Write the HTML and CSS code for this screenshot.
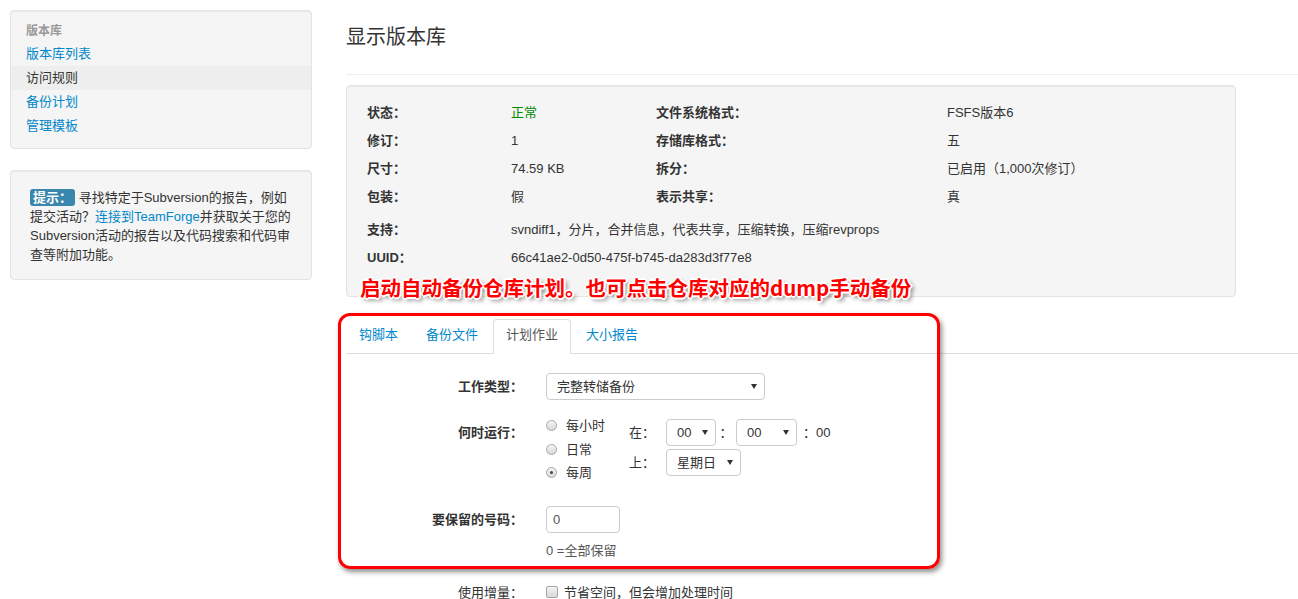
FILE: index.html
```html
<!DOCTYPE html>
<html lang="zh-CN">
<head>
    <meta charset="UTF-8">
    <title>显示版本库</title>
    <link rel="stylesheet" href="styles.css">
</head>
<body>
    <div class="page">
        <div class="sidebar">
            <div class="well nav-well">
                <div class="nav-header">版本库</div>
                <a class="nav-item" href="#">版本库列表</a>
                <a class="nav-item active" href="#">访问规则</a>
                <a class="nav-item" href="#">备份计划</a>
                <a class="nav-item" href="#">管理模板</a>
            </div>
            <div class="well tip-well">
                <span class="tip-label">提示：</span> 寻找特定于Subversion的报告，例如提交活动？<a href="#">连接到TeamForge</a>并获取关于您的Subversion活动的报告以及代码搜索和代码审查等附加功能。
            </div>
        </div>

        <div class="main">
            <div class="page-header">
                <h1>显示版本库</h1>
            </div>

            <div class="well info-well">
                <div class="info-grid">
                    <span class="k">状态：</span><span class="ok">正常</span>
                    <span class="k">文件系统格式：</span><span>FSFS版本6</span>
                    <span class="k">修订：</span><span>1</span>
                    <span class="k">存储库格式：</span><span>五</span>
                    <span class="k">尺寸：</span><span>74.59 KB</span>
                    <span class="k">拆分：</span><span>已启用（1,000次修订）</span>
                    <span class="k">包装：</span><span>假</span>
                    <span class="k">表示共享：</span><span>真</span>
                </div>
                <div class="info-grid wide">
                    <span class="k">支持：</span><span>svndiff1，分片，合并信息，代表共享，压缩转换，压缩revprops</span>
                    <span class="k">UUID：</span><span>66c41ae2-0d50-475f-b745-da283d3f77e8</span>
                </div>
            </div>

            <ul class="tabs">
                <li><a href="#">钩脚本</a></li>
                <li><a href="#">备份文件</a></li>
                <li class="active"><a href="#">计划作业</a></li>
                <li><a href="#">大小报告</a></li>
            </ul>

            <div class="tab-pane">
                <div class="form-row">
                    <label class="lbl">工作类型：</label>
                    <div class="controls">
                        <span class="select-wrap sel-type">
                            <select><option>完整转储备份</option></select>
                        </span>
                    </div>
                </div>

                <div class="form-row when-row">
                    <label class="lbl">何时运行：</label>
                    <div class="controls when">
                        <div class="radio-list">
                            <label class="radio"><input type="radio" name="when">每小时</label>
                            <label class="radio"><input type="radio" name="when">日常</label>
                            <label class="radio"><input type="radio" name="when" checked>每周</label>
                        </div>
                        <div class="time">
                            <div class="time-line">
                                <span class="time-lbl">在：</span>
                                <span class="select-wrap sel-hour"><select><option>00</option></select></span>
                                <span class="sep">：</span>
                                <span class="select-wrap sel-min"><select><option>00</option></select></span>
                                <span class="tail">：00</span>
                            </div>
                            <div class="time-line">
                                <span class="time-lbl">上：</span>
                                <span class="select-wrap sel-day"><select><option>星期日</option></select></span>
                            </div>
                        </div>
                    </div>
                </div>

                <div class="form-row">
                    <label class="lbl">要保留的号码：</label>
                    <div class="controls">
                        <input class="num-input" type="text" value="0">
                        <div class="help">0 =全部保留</div>
                    </div>
                </div>

                <div class="form-row">
                    <label class="lbl plain">使用增量：</label>
                    <div class="controls">
                        <label class="check"><input type="checkbox">节省空间，但会增加处理时间</label>
                    </div>
                </div>
            </div>
        </div>
    </div>

    <div class="callout-frame"></div>
    <div class="callout-text">启动自动备份仓库计划。也可点击仓库对应的dump手动备份</div>
</body>
</html>
```

FILE: styles.css
```css
* {
    box-sizing: border-box;
}
body {
    margin: 0;
    padding: 10px 0 0 10px;
    font-family: "Liberation Sans", "Noto Sans CJK SC", sans-serif;
    font-size: 13px;
    line-height: 18px;
    color: #333;
    background: #fff;
}
a {
    color: #0088cc;
    text-decoration: none;
}
.page {
    display: flex;
    align-items: flex-start;
    gap: 34px;
}
.sidebar {
    width: 302px;
    flex-shrink: 0;
}
.well {
    background: #f5f5f5;
    border: 1px solid #e3e3e3;
    border-radius: 4px;
    box-shadow: inset 0 1px 1px rgba(0, 0, 0, 0.05);
}
.nav-well {
    padding: 10px 0;
}
.nav-header {
    padding: 0 15px;
    line-height: 21px;
    font-size: 12px;
    font-weight: bold;
    color: #999;
}
.nav-item {
    display: block;
    padding: 0 15px;
    line-height: 24px;
}
.nav-item.active {
    background: #eee;
    color: #333;
}
.tip-well {
    margin-top: 21px;
    padding: 17px 16px 15px 19px;
    line-height: 19px;
}
.tip-label {
    display: inline-block;
    padding: 1px 3px;
    line-height: 15px;
    border-radius: 3px;
    background: #3a87ad;
    color: #fff;
    font-weight: bold;
}

.main {
    flex: 1;
}
.page-header {
    padding: 15px 0 25px;
    border-bottom: 1px solid #eee;
}
.page-header h1 {
    margin: 0;
    font-size: 20px;
    line-height: 24px;
    font-weight: normal;
}
.info-well {
    width: 890px;
    margin-top: 10px;
    padding: 13px 20px 24px;
}
.info-grid {
    display: grid;
    grid-template-columns: 144px 145px 291px 1fr;
    grid-auto-rows: 28px;
    align-items: center;
}
.info-grid.wide {
    grid-template-columns: 144px 1fr;
    margin-top: 5px;
}
.k {
    font-weight: bold;
}
.ok {
    color: #008800;
}

.tabs {
    display: flex;
    margin: 22px 0 0;
    padding: 0;
    list-style: none;
    border-bottom: 1px solid #ddd;
}
.tabs li {
    margin-right: 2px;
    margin-bottom: -1px;
}
.tabs a {
    display: block;
    padding: 6px 12px 9px;
    line-height: 18px;
    border: 1px solid transparent;
    border-radius: 4px 4px 0 0;
}
.tabs li.active a {
    border-color: #ddd #ddd transparent;
    background: #fff;
    color: #555;
}

.tab-pane {
    padding-top: 19px;
}
.form-row {
    display: grid;
    grid-template-columns: 177px 1fr;
    column-gap: 23px;
    margin-bottom: 19px;
}
.form-row.when-row {
    margin-bottom: 21px;
}
.lbl {
    text-align: right;
    line-height: 27px;
    font-weight: bold;
}
.lbl.plain {
    font-weight: normal;
}
.select-wrap {
    position: relative;
    display: inline-block;
}
.select-wrap::after {
    content: "";
    position: absolute;
    right: 8px;
    top: 11px;
    border-left: 3px solid transparent;
    border-right: 3px solid transparent;
    border-top: 5px solid #333;
}
.select-wrap select {
    appearance: none;
    -webkit-appearance: none;
    width: 100%;
    height: 27px;
    margin: 0;
    padding: 0 10px;
    border: 1px solid #ccc;
    border-radius: 4px;
    background: #fff;
    font: inherit;
    color: #333;
}
.sel-type {
    width: 219px;
}
.sel-hour {
    width: 50px;
}
.sel-min {
    width: 61px;
}
.sel-day {
    width: 75px;
}

.when {
    display: flex;
    gap: 24px;
}
.radio-list {
    margin-top: -5px;
}
.radio {
    display: flex;
    align-items: center;
    line-height: 23.5px;
}
.radio input,
.check input {
    appearance: none;
    -webkit-appearance: none;
    margin: 0;
    border: 1px solid #a6a6a6;
    background: linear-gradient(#f4f4f4, #d9d9d9);
}
.radio input {
    position: relative;
    width: 11px;
    height: 11px;
    margin-right: 9px;
    border-radius: 50%;
}
.radio input:checked::after {
    content: "";
    position: absolute;
    left: 3px;
    top: 3px;
    width: 3px;
    height: 3px;
    border-radius: 50%;
    background: #444;
}
.time-line {
    display: flex;
    align-items: center;
    height: 27px;
}
.time-line + .time-line {
    margin-top: 3px;
}
.time-lbl {
    width: 37px;
}
.sep {
    width: 20px;
    text-align: center;
}
.tail {
    margin-left: 6px;
}
.num-input {
    display: block;
    width: 74px;
    height: 27px;
    margin: 0;
    padding: 0 6px;
    border: 1px solid #ccc;
    border-radius: 4px;
    font: inherit;
    color: #555;
}
.help {
    margin-top: 9px;
    color: #555;
}
.check {
    display: flex;
    align-items: center;
    line-height: 27px;
}
.check input {
    width: 12px;
    height: 12px;
    margin-right: 6px;
    border-radius: 2px;
}

.callout-frame {
    position: absolute;
    left: 338px;
    top: 313px;
    width: 602px;
    height: 256px;
    border: 3px solid #f00;
    border-radius: 12px;
    box-shadow: 2px 3px 5px rgba(0, 0, 0, 0.45);
    pointer-events: none;
}
.callout-text {
    position: absolute;
    left: 360px;
    top: 274px;
    font-family: "Noto Sans CJK SC", "Liberation Sans", sans-serif;
    font-size: 20.5px;
    line-height: 26px;
    font-weight: bold;
    color: #f00;
    white-space: nowrap;
    text-shadow: -1px -1px 0 #fff, 1px -1px 0 #fff, -1px 1px 0 #fff, 1px 1px 0 #fff,
        0 -2px 0 #fff, 0 2px 0 #fff, -2px 0 0 #fff, 2px 0 0 #fff,
        3px 3px 4px rgba(0, 0, 0, 0.55);
}
```
